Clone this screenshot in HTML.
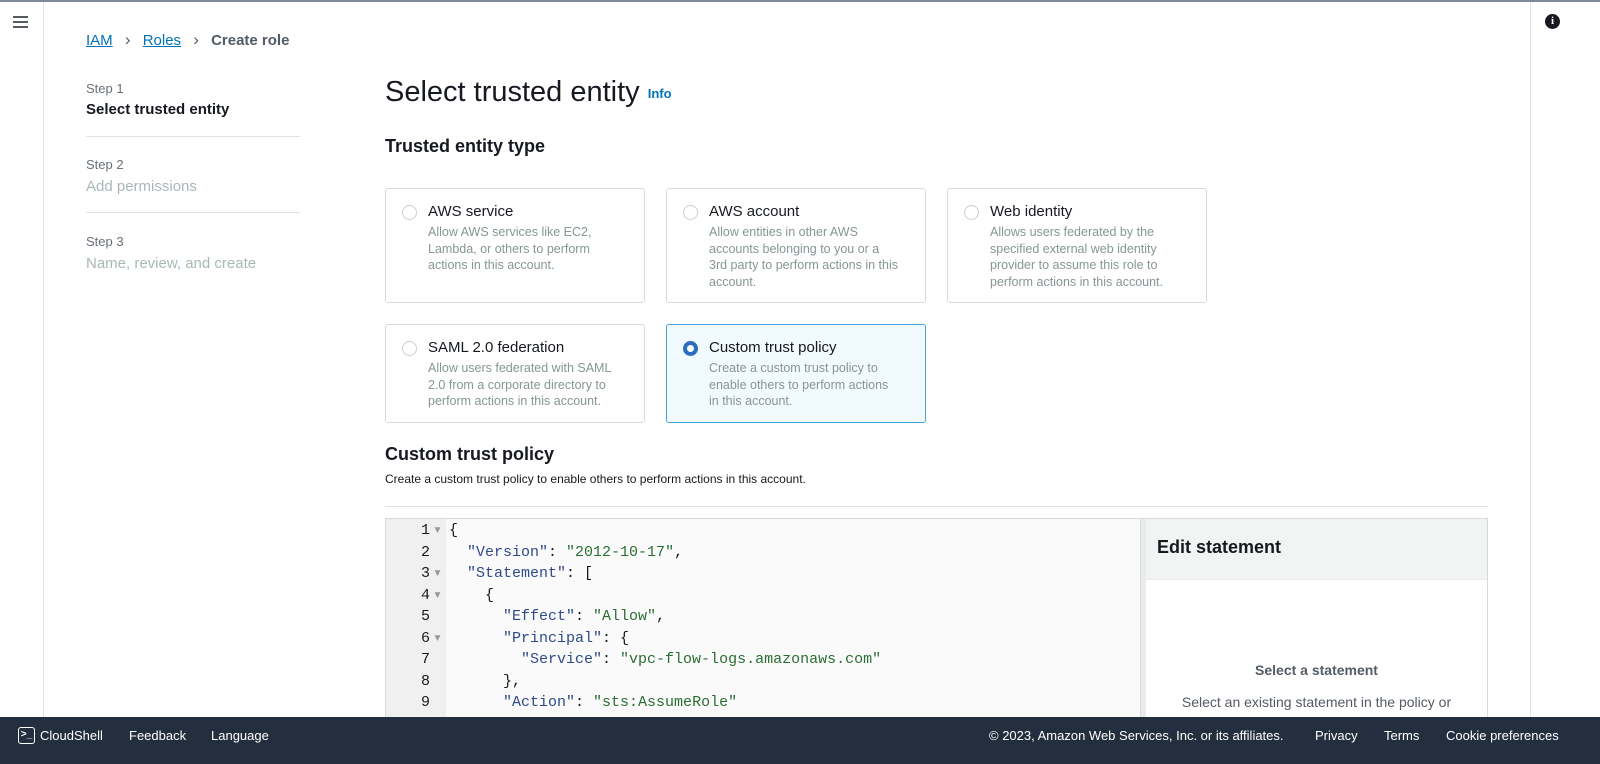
<!DOCTYPE html>
<html><head><meta charset="utf-8"><style>
*{box-sizing:border-box;margin:0;padding:0}
body{width:1600px;height:764px;overflow:hidden;background:#fff;font-family:"Liberation Sans",Arial,sans-serif;color:#16191f;position:relative}
.abs{position:absolute}
.topbar{left:0;top:0;width:1600px;height:2px;background:#7d8998}
.lnav{left:0;top:2px;width:44px;height:715px;border-right:1px solid #e3e3e3}
.rnav{left:1530px;top:2px;width:70px;height:715px;border-left:1px solid #e3e3e3}
a{color:#0073bb;text-decoration:underline}
.crumb{left:86px;top:30px;font-size:15px;color:#545b64}
.step{left:86px;font-size:13px;color:#687078}
.stepn{left:86px;font-size:15px}
.hr{height:1px;background:#e3e3e3}
.card{border:1px solid #d5dbdb;border-radius:3px;background:#fff}
.card .t{position:absolute;left:42px;top:14px;font-size:15px;color:#16191f}
.card .d{position:absolute;left:42px;top:35px;font-size:12.5px;line-height:16.5px;color:#879596}
.card .r{position:absolute;left:16px;top:16px;width:15px;height:15px;border:1.5px solid #cbd0d3;border-radius:50%}
.sel{background:#f1faff;border-color:#44a0d9}
.sel .r{border:4.5px solid #2b6ebf;background:#fff}
.code{font-family:"Liberation Mono",monospace;font-size:15px;line-height:21.5px;white-space:pre}
.k{color:#2f4a8a}.s{color:#2b6e33}
.footer{left:0;top:717px;width:1600px;height:47px;background:#232f3e;color:#fff;font-size:13px}
.footer span{position:absolute;top:11px}
</style></head><body>
<div class="abs topbar"></div>
<div class="abs lnav"></div>
<div class="abs" style="left:13px;top:16px;width:15px">
<div style="height:2px;background:#545b64;margin-bottom:3px"></div><div style="height:2px;background:#545b64;margin-bottom:3px"></div><div style="height:2px;background:#545b64"></div></div>
<div class="abs rnav"></div>
<div class="abs" style="left:1545px;top:14px;width:15px;height:15px;border-radius:50%;background:#16191f;color:#fff;font-size:11px;font-weight:bold;text-align:center;line-height:15px;font-family:'Liberation Serif',serif">i</div>

<div class="abs crumb"><a>IAM</a> <span style="margin:0 8px;font-size:17px">&#x203A;</span> <a>Roles</a> <span style="margin:0 8px;font-size:17px">&#x203A;</span> <b>Create role</b></div>
<div class="abs step" style="top:81px">Step 1</div>
<div class="abs stepn" style="top:101px;font-weight:bold;color:#16191f">Select trusted entity</div>
<div class="abs hr" style="left:86px;top:136px;width:214px"></div>
<div class="abs step" style="top:157px">Step 2</div>
<div class="abs stepn" style="top:178px;color:#aab7b8">Add permissions</div>
<div class="abs hr" style="left:86px;top:212px;width:214px"></div>
<div class="abs step" style="top:234px">Step 3</div>
<div class="abs stepn" style="top:255px;color:#aab7b8">Name, review, and create</div>

<div class="abs" style="left:385px;top:76px;font-size:29px;color:#16191f">Select trusted entity <span style="font-size:13px;color:#0073bb;font-weight:bold;vertical-align:middle">Info</span></div>
<div class="abs" style="left:385px;top:136px;font-size:18px;font-weight:bold;color:#16191f">Trusted entity type</div>

<div class="abs card" style="left:385px;top:188px;width:260px;height:115px"><div class="r"></div><div class="t">AWS service</div><div class="d">Allow AWS services like EC2,<br>Lambda, or others to perform<br>actions in this account.</div></div>
<div class="abs card" style="left:666px;top:188px;width:260px;height:115px"><div class="r"></div><div class="t">AWS account</div><div class="d">Allow entities in other AWS<br>accounts belonging to you or a<br>3rd party to perform actions in this<br>account.</div></div>
<div class="abs card" style="left:947px;top:188px;width:260px;height:115px"><div class="r"></div><div class="t">Web identity</div><div class="d">Allows users federated by the<br>specified external web identity<br>provider to assume this role to<br>perform actions in this account.</div></div>
<div class="abs card" style="left:385px;top:324px;width:260px;height:99px"><div class="r"></div><div class="t">SAML 2.0 federation</div><div class="d">Allow users federated with SAML<br>2.0 from a corporate directory to<br>perform actions in this account.</div></div>
<div class="abs card sel" style="left:666px;top:324px;width:260px;height:99px"><div class="r"></div><div class="t">Custom trust policy</div><div class="d">Create a custom trust policy to<br>enable others to perform actions<br>in this account.</div></div>

<div class="abs" style="left:385px;top:444px;font-size:18px;font-weight:bold">Custom trust policy</div>
<div class="abs" style="left:385px;top:472px;font-size:12px;color:#16191f">Create a custom trust policy to enable others to perform actions in this account.</div>
<div class="abs hr" style="left:385px;top:506px;width:1103px"></div>

<div class="abs" style="left:385px;top:518px;width:1103px;height:199px;border:1px solid #d5dbdb;border-bottom:0;background:#fafafa"></div>
<div class="abs" style="left:386px;top:519px;width:60px;height:198px;background:#f0f0f0"></div>
<div class="abs code" style="left:386px;top:520px;width:44px;text-align:right;color:#16191f">1
2
3
4
5
6
7
8
9</div>
<div class="abs code" style="left:433px;top:520px;color:#999">▾

▾
▾

▾</div>
<div class="abs code" style="left:449px;top:520px">{
  <span class="k">"Version"</span>: <span class="s">"2012-10-17"</span>,
  <span class="k">"Statement"</span>: [
    {
      <span class="k">"Effect"</span>: <span class="s">"Allow"</span>,
      <span class="k">"Principal"</span>: {
        <span class="k">"Service"</span>: <span class="s">"vpc-flow-logs.amazonaws.com"</span>
      },
      <span class="k">"Action"</span>: <span class="s">"sts:AssumeRole"</span></div>
<div class="abs" style="left:1140px;top:519px;width:6px;height:198px;background:#e9ebed;border-left:1px solid #d5dbdb"></div>
<div class="abs" style="left:1146px;top:519px;width:341px;height:61px;background:#f2f3f3;border-bottom:1px solid #eaeded"></div>
<div class="abs" style="left:1146px;top:580px;width:341px;height:137px;background:#fff"></div>
<div class="abs" style="left:1157px;top:537px;font-size:18px;font-weight:bold">Edit statement</div>
<div class="abs" style="left:1146px;top:662px;width:341px;text-align:center;font-size:14px;font-weight:bold;color:#545b64">Select a statement</div>
<div class="abs" style="left:1146px;top:694px;width:341px;text-align:center;font-size:14px;color:#545b64">Select an existing statement in the policy or</div>

<div class="abs footer">
<span style="left:18px;top:10px;width:17px;height:17px;border:1.5px solid #fff;border-radius:3px;font-size:10px;line-height:13px;text-align:center;font-weight:bold">&gt;_</span>
<span style="left:40px">CloudShell</span>
<span style="left:129px">Feedback</span>
<span style="left:211px">Language</span>
<span style="left:989px">© 2023, Amazon Web Services, Inc. or its affiliates.</span>
<span style="left:1315px">Privacy</span>
<span style="left:1384px">Terms</span>
<span style="left:1446px">Cookie preferences</span>
</div>
</body></html>
